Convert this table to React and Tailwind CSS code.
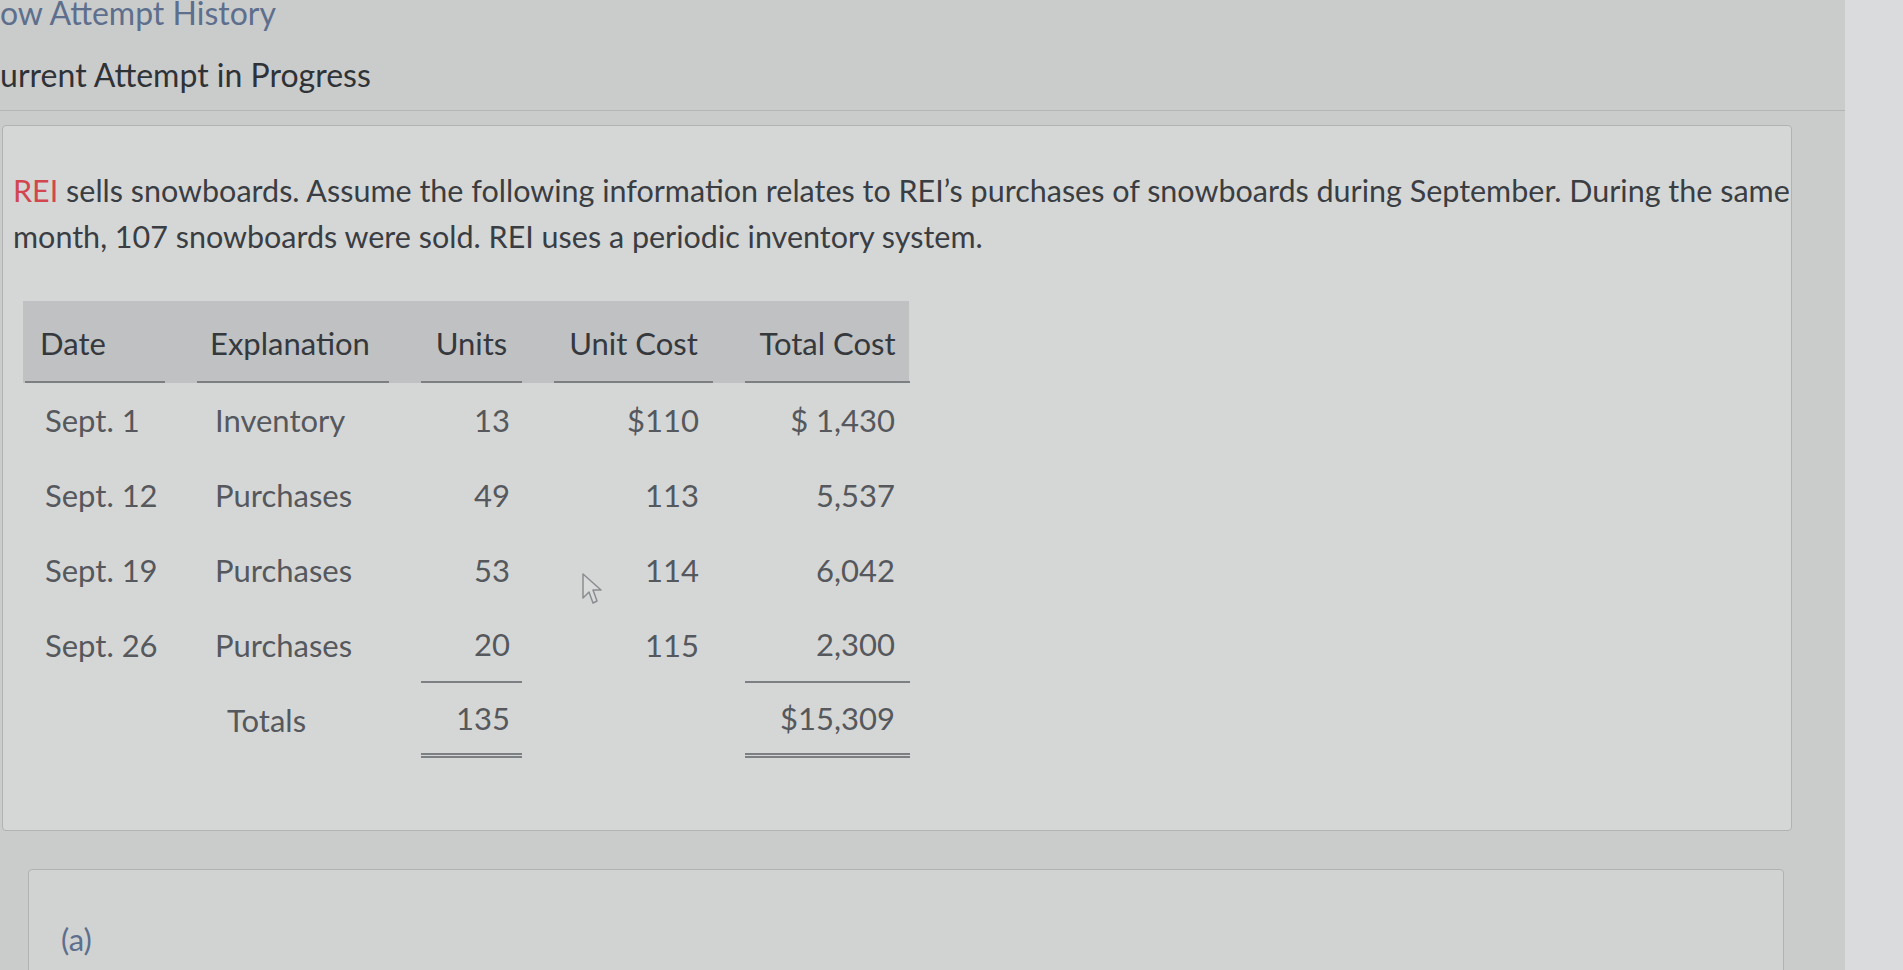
import React from "react";

const rows = [
  { date: "Sept. 1", expl: "Inventory", units: "13", cost: "$110", total: "$ 1,430" },
  { date: "Sept. 12", expl: "Purchases", units: "49", cost: "113", total: "5,537" },
  { date: "Sept. 19", expl: "Purchases", units: "53", cost: "114", total: "6,042" },
  { date: "Sept. 26", expl: "Purchases", units: "20", cost: "115", total: "2,300", rule: true },
];

function Cursor() {
  return (
    <svg
      className="absolute left-[578px] top-[446px]"
      width="24"
      height="34"
      viewBox="0 0 24 34"
      fill="none"
    >
      <path
        d="M2 2 L2 26 L8 20 L12 31 L16 29 L12 18 L20 18 Z"
        fill="#d9dbdb"
        stroke="#8a8d90"
        strokeWidth="1.5"
        strokeLinejoin="round"
      />
    </svg>
  );
}

export default function App() {
  return (
    <div className="flex min-h-screen bg-[#cacccc] font-['Lato','Liberation_Sans',sans-serif] overflow-hidden">
      <div className="w-[1845px] shrink-0">
        {/* headings */}
        <div className="-mt-[6px] -ml-[35px] text-[32px] leading-[38px] text-[#5d6f8c]">
          Show Attempt History
        </div>
        <div className="mt-[24px] -ml-[21px] text-[32px] leading-[38px] text-[#2f3237]">
          Current Attempt in Progress
        </div>
        <div className="mt-[16px] h-px bg-[#b3b5b6]" />

        {/* problem card */}
        <div className="relative mt-[14px] ml-[2px] w-[1790px] rounded-[4px] border border-[#b0b2b3] bg-[#d5d7d7] pb-[72px] pt-[41px]">
          <p className="pl-[10px] text-[30.5px] leading-[46px] text-[#3a3d42]">
            <span className="text-[#d2474f]">REI</span> sells snowboards. Assume the following information relates to REI’s purchases of snowboards during September. During the same
            <br />
            month, 107 snowboards were sold. REI uses a periodic inventory system.
          </p>

          <div className="ml-[20px] mt-[42px] w-[886px] text-[31px]">
            {/* header */}
            <div className="grid h-[82px] grid-cols-[140px_192px_101px_159px_165px] gap-x-[32px] bg-[#bfc1c2] pl-[2px] text-[#35383d]">
              <div className="flex items-center border-b-2 border-[#7d8083] pl-[15px] pt-[4px]">Date</div>
              <div className="flex items-center border-b-2 border-[#7d8083] pl-[13px] pt-[4px]">Explanation</div>
              <div className="flex items-center justify-center border-b-2 border-[#7d8083] pt-[4px]">Units</div>
              <div className="flex items-center justify-center border-b-2 border-[#7d8083] pt-[4px]">Unit Cost</div>
              <div className="flex items-center justify-center border-b-2 border-[#7d8083] pt-[4px]">Total Cost</div>
            </div>

            {/* body */}
            {rows.map((r) => (
              <div
                key={r.date}
                className="grid h-[75px] grid-cols-[140px_192px_101px_159px_165px] gap-x-[32px] pl-[2px] text-[#55585c]"
              >
                <div className="flex items-center pl-[20px]">{r.date}</div>
                <div className="flex items-center pl-[18px]">{r.expl}</div>
                <div className={`flex items-center justify-end pr-[12px] ${r.rule ? "border-b-2 border-[#7d8083]" : ""}`}>
                  {r.units}
                </div>
                <div className="flex items-center justify-end pr-[14px]">{r.cost}</div>
                <div className={`flex items-center justify-end pr-[15px] ${r.rule ? "border-b-2 border-[#7d8083]" : ""}`}>
                  {r.total}
                </div>
              </div>
            ))}

            {/* totals */}
            <div className="grid h-[75px] grid-cols-[140px_192px_101px_159px_165px] gap-x-[32px] pl-[2px] text-[#55585c]">
              <div />
              <div className="flex items-center pl-[30px]">Totals</div>
              <div className="flex items-center justify-end border-b-[5px] border-double border-[#7d8083] pr-[12px]">
                135
              </div>
              <div />
              <div className="flex items-center justify-end border-b-[5px] border-double border-[#7d8083] pr-[15px]">
                $15,309
              </div>
            </div>
          </div>

          <Cursor />
        </div>

        {/* part (a) card */}
        <div className="mt-[38px] ml-[28px] h-[200px] w-[1756px] rounded-[4px] border border-[#b0b2b3] bg-[#d1d3d3] pl-[32px] pt-[50px]">
          <span className="text-[31px] leading-[38px] text-[#5d6f8c]">(a)</span>
        </div>
      </div>
      <div className="flex-1 bg-[#dadbdc]" />
    </div>
  );
}
